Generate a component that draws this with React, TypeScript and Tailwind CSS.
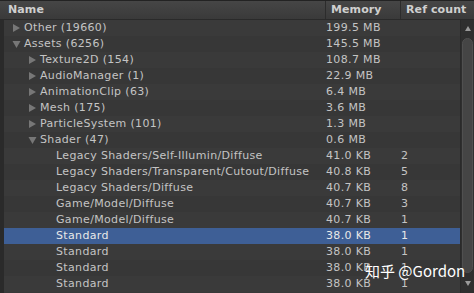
const rows: { name: string; level: number; arrow?: "right" | "down"; mem: string; ref?: string; selected?: boolean }[] = [
  { name: "Other (19660)", level: 0, arrow: "right", mem: "199.5 MB" },
  { name: "Assets (6256)", level: 0, arrow: "down", mem: "145.5 MB" },
  { name: "Texture2D (154)", level: 1, arrow: "right", mem: "108.7 MB" },
  { name: "AudioManager (1)", level: 1, arrow: "right", mem: "22.9 MB" },
  { name: "AnimationClip (63)", level: 1, arrow: "right", mem: "6.4 MB" },
  { name: "Mesh (175)", level: 1, arrow: "right", mem: "3.6 MB" },
  { name: "ParticleSystem (101)", level: 1, arrow: "right", mem: "1.3 MB" },
  { name: "Shader (47)", level: 1, arrow: "down", mem: "0.6 MB" },
  { name: "Legacy Shaders/Self-Illumin/Diffuse", level: 2, mem: "41.0 KB", ref: "2" },
  { name: "Legacy Shaders/Transparent/Cutout/Diffuse", level: 2, mem: "40.8 KB", ref: "5" },
  { name: "Legacy Shaders/Diffuse", level: 2, mem: "40.7 KB", ref: "8" },
  { name: "Game/Model/Diffuse", level: 2, mem: "40.7 KB", ref: "3" },
  { name: "Game/Model/Diffuse", level: 2, mem: "40.7 KB", ref: "1" },
  { name: "Standard", level: 2, mem: "38.0 KB", ref: "1", selected: true },
  { name: "Standard", level: 2, mem: "38.0 KB", ref: "1" },
  { name: "Standard", level: 2, mem: "38.0 KB", ref: "1" },
  { name: "Standard", level: 2, mem: "38.0 KB", ref: "1" },
];

const indents = ["pl-[8px]", "pl-[24px]", "pl-[40px]"];

function Arrow({ dir }: { dir?: "right" | "down" }) {
  if (!dir) return <span className="w-[12px] shrink-0" />;
  return (
    <svg width="12" height="16" viewBox="0 0 12 16" className="shrink-0">
      {dir === "right" ? (
        <path d="M1 4 L8 8 L1 12 Z" fill="#777777" />
      ) : (
        <path d="M0.5 5 L8.5 5 L4.5 12 Z" fill="#777777" />
      )}
    </svg>
  );
}

export default function App() {
  return (
    <div
      className="w-[474px] h-[293px] overflow-hidden bg-[#383838] text-[#c4c4c4] text-[11px] relative flex flex-col"
      style={{ fontFamily: '"DejaVu Sans", Verdana, sans-serif' }}
    >
      <div className="h-[20px] shrink-0 flex border-t border-[#232323] border-b border-b-[#2a2a2a] bg-gradient-to-b from-[#464646] to-[#3a3a3a] font-bold text-[#cfcfcf] tracking-[0.1px]">
        <div className="w-[326px] pl-[8px] flex items-center border-r border-[#2c2c2c]">Name</div>
        <div className="w-[75px] pl-[5px] flex items-center border-r border-[#2c2c2c]">Memory</div>
        <div className="flex-1 pl-[5px] flex items-center">Ref count</div>
      </div>
      <div className="flex flex-1 min-h-0 border-l-4 border-[#2a2a2a] tracking-[0.35px]">
        <div className="flex-1 flex flex-col min-w-0">
          {rows.map((r, i) => (
            <div
              key={i}
              className={`h-[16px] shrink-0 flex items-center whitespace-nowrap ${
                r.selected ? "bg-[#3e5f96] text-[#e8e8e8]" : i % 2 === 0 ? "bg-[#3a3a3a]" : "bg-[#373737]"
              }`}
            >
              <div className={`w-[322px] flex items-center ${indents[r.level]}`}>
                <Arrow dir={r.arrow} />
                <span>{r.name}</span>
              </div>
              <div className="w-[75px]">{r.mem}</div>
              <div className="flex-1">{r.ref ?? ""}</div>
            </div>
          ))}
        </div>
        <div className="w-[14px] shrink-0 bg-[#2f2f2f] flex flex-col items-center border-l border-[#2a2a2a]">
          <svg width="10" height="12" viewBox="0 0 10 12" className="mt-[3px]">
            <path d="M2 8 L5 3 L8 8 Z" fill="#9a9a9a" />
          </svg>
          <div className="w-[11px] mt-[3px] h-[235px] rounded-full bg-[#454545] border border-[#505050]" />
          <div className="flex-1" />
          <svg width="10" height="12" viewBox="0 0 10 12" className="mb-[4px]">
            <path d="M2 4 L8 4 L5 9 Z" fill="#9a9a9a" />
          </svg>
        </div>
      </div>
      <div
        className="absolute left-[365px] top-[261px] text-[15px] leading-[20px] text-white whitespace-nowrap"
        style={{ fontFamily: '"Noto Sans CJK SC", "Noto Sans", sans-serif' }}
      >
        知乎 @Gordon
      </div>
    </div>
  );
}
